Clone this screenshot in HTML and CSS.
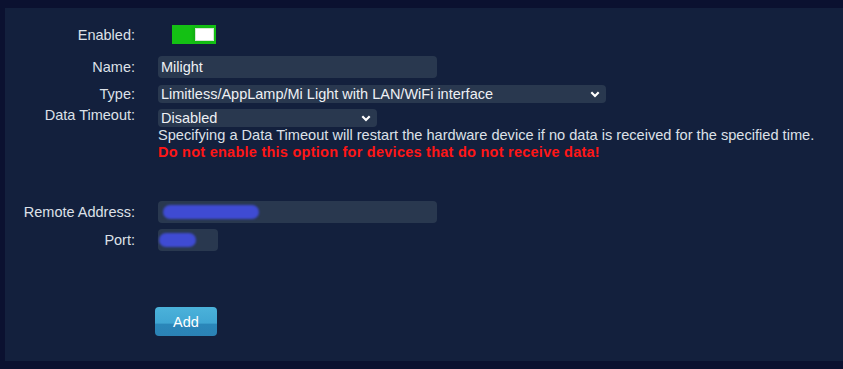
FILE: index.html
```html
<!DOCTYPE html>
<html lang="en">
<head>
    <meta charset="UTF-8">
    <title>Add Hardware</title>
    <link rel="stylesheet" href="styles.css">
</head>
<body>
    <div class="panel">
        <form class="hw-form">
            <!-- Enabled -->
            <div class="row row-enabled">
                <label class="lbl">Enabled:</label>
                <div class="field">
                    <span class="toggle"><span class="knob"></span></span>
                </div>
            </div>

            <div class="row row-name">
                <label class="lbl" for="name">Name:</label>
                <div class="field"><input type="text" id="name" class="txt txt-wide" value="Milight"></div>
            </div>

            <div class="row row-type">
                <label class="lbl" for="type">Type:</label>
                <div class="field">
                    <select id="type" class="sel sel-type">
                        <option>Limitless/AppLamp/Mi Light with LAN/WiFi interface</option>
                    </select>
                </div>
            </div>

            <div class="row row-timeout">
                <label class="lbl" for="timeout">Data Timeout:</label>
                <div class="field">
                    <select id="timeout" class="sel sel-timeout">
                        <option>Disabled</option>
                    </select>
                    <p class="help">Specifying a Data Timeout will restart the hardware device if no data is received for the specified time.</p>
                    <p class="warn">Do not enable this option for devices that do not receive data!</p>
                </div>
            </div>

            <div class="row row-address">
                <label class="lbl" for="address">Remote Address:</label>
                <div class="field redacted">
                    <input type="text" id="address" class="txt txt-wide" value="">
                    <span class="scribble scribble-addr"></span>
                </div>
            </div>

            <div class="row row-port">
                <label class="lbl" for="port">Port:</label>
                <div class="field redacted">
                    <input type="text" id="port" class="txt txt-port" value="">
                    <span class="scribble scribble-port"></span>
                </div>
            </div>

            <div class="row row-submit">
                <span class="lbl"></span>
                <div class="field"><button type="button" class="btn-add">Add</button></div>
            </div>
        </form>
    </div>
</body>
</html>
```

FILE: styles.css
```css
/* Reset */
body, p {
    margin: 0;
    padding: 0;
}

body {
    font-family: 'Liberation Sans', Arial, sans-serif;
    font-size: 14.5px;
    background-color: #0b1130;
    color: #dde1e8;
    padding: 8px 0 8px 5px;
    height: 369px;
    box-sizing: border-box;
}

.panel {
    background-color: #13203d;
    height: 353px;
    padding-top: 17px;
    box-sizing: border-box;
}

.hw-form {
    display: flex;
    flex-direction: column;
}

.row {
    display: flex;
    align-items: center;
    gap: 23px;
}

.lbl {
    width: 130px;
    flex: none;
    text-align: right;
}

.field {
    display: flex;
    flex-direction: column;
}

/* row spacing */
.row-name { margin-top: 12px; }
.row-type { margin-top: 7px; }
.row-timeout { margin-top: 6px; align-items: flex-start; }
.row-timeout .lbl { margin-top: -2px; }
.row-address { margin-top: 40px; }
.row-port { margin-top: 6px; }
.row-submit { margin-top: 56px; }

/* toggle switch */
.toggle {
    display: flex;
    justify-content: flex-end;
    width: 44px;
    height: 19px;
    margin-left: 14px;
    padding: 3px 2px 3px 0;
    box-sizing: border-box;
    background-color: #14c114;
}

.knob {
    width: 19px;
    height: 13px;
    background-color: #ffffff;
    border: 1px solid #d5e8d5;
    box-sizing: border-box;
    box-shadow: -2px 0 3px rgba(0, 0, 0, 0.12);
}

/* inputs */
.txt, .sel {
    font-family: 'Liberation Sans', Arial, sans-serif;
    font-size: 14.5px;
    color: #eef0f4;
    background-color: #29384f;
    border: none;
    border-radius: 4px;
    outline: none;
    box-sizing: border-box;
}

.txt {
    height: 22px;
    padding: 0 3px;
}

.txt-wide { width: 279px; }
.txt-port { width: 60px; }

.sel {
    -webkit-appearance: none;
    appearance: none;
    height: 18px;
    padding: 0 20px 0 3px;
    background-image: url("data:image/svg+xml,%3Csvg xmlns='http://www.w3.org/2000/svg' width='10' height='7' viewBox='0 0 10 7'%3E%3Cpath d='M1.3 1.3 L5 5 L8.7 1.3' fill='none' stroke='%23ffffff' stroke-width='2.2'/%3E%3C/svg%3E");
    background-repeat: no-repeat;
    background-position: right 6px center;
    background-size: 10px 7px;
}

.sel-type { width: 448px; }
.sel-timeout { width: 219px; }

.help {
    font-size: 14.6px;
    line-height: 17px;
    white-space: nowrap;
}

.warn {
    line-height: 17px;
    color: #ff1616;
    font-weight: bold;
    letter-spacing: 0.25px;
}

/* blurred-out values */
.redacted {
    position: relative;
}

.scribble {
    position: absolute;
    background-color: #3f4bd3;
    border-radius: 8px;
    filter: blur(1px);
}

.scribble-addr {
    left: 5px;
    top: 4px;
    width: 96px;
    height: 14px;
}

.scribble-port {
    left: 1px;
    top: 4px;
    width: 37px;
    height: 14px;
}

/* button */
.btn-add {
    width: 62px;
    height: 29px;
    margin-left: -3px;
    border: none;
    border-radius: 4px;
    background: linear-gradient(#4bb2da 0%, #40a6d3 55%, #2a86b9 60%, #2b82b5 100%);
    color: #ffffff;
    font-family: 'Liberation Sans', Arial, sans-serif;
    font-size: 14.5px;
    cursor: pointer;
}
```
